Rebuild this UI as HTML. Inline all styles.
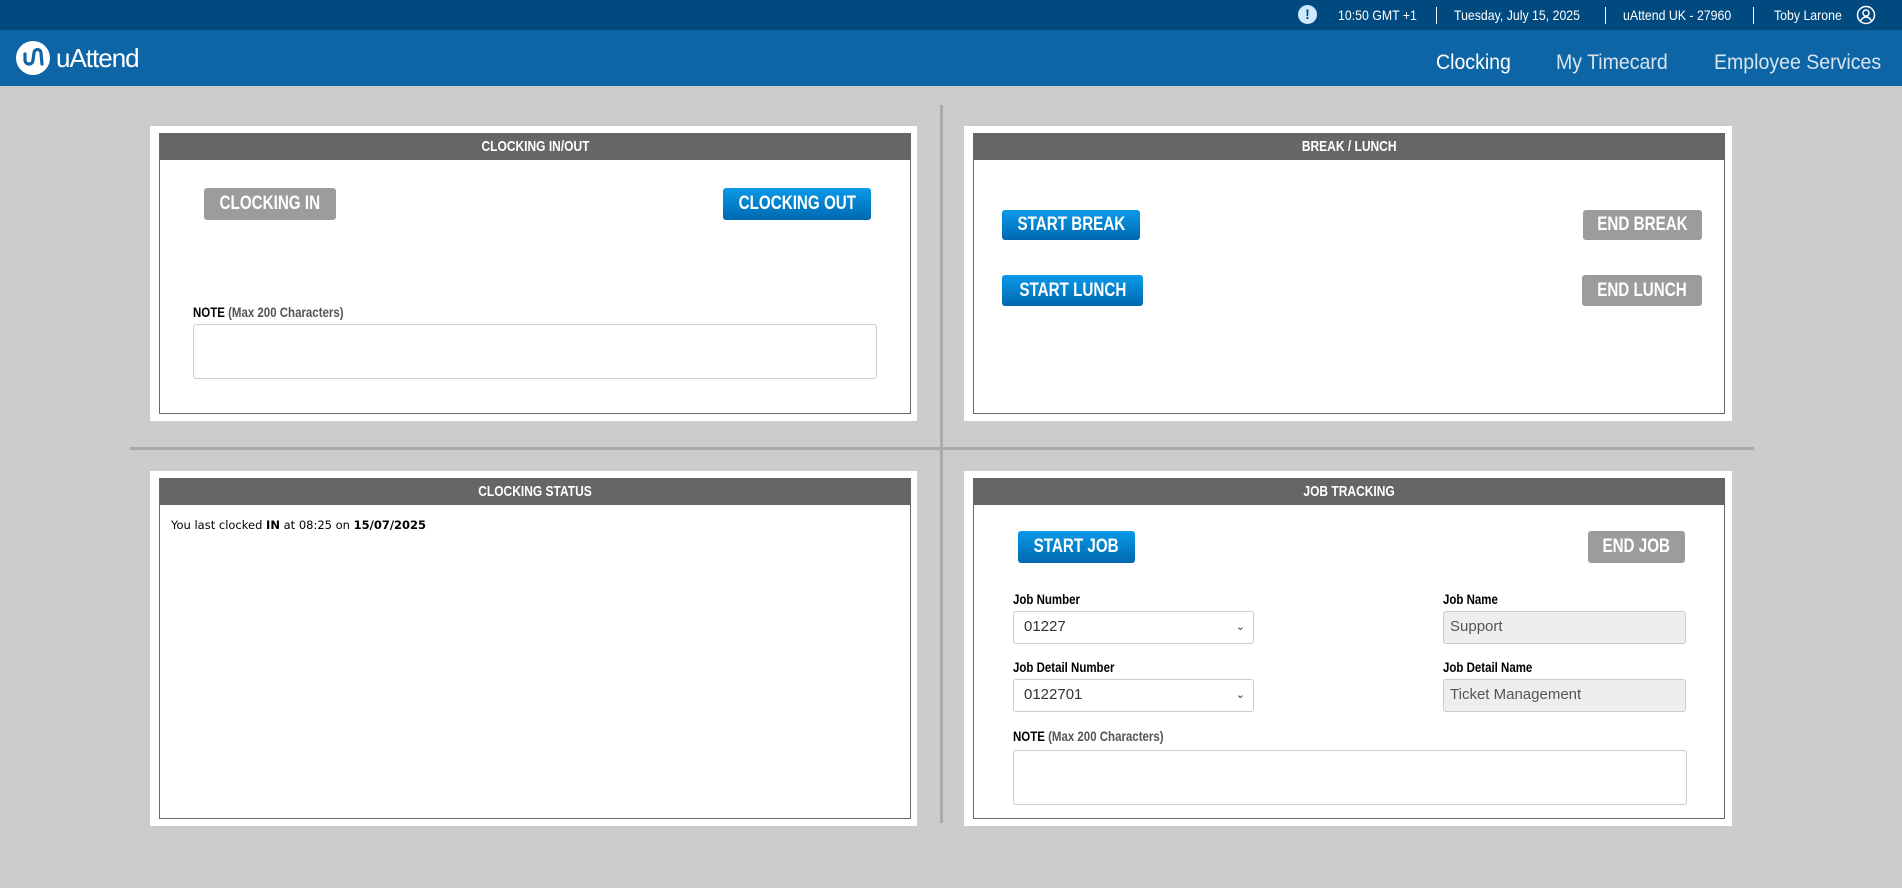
<!DOCTYPE html>
<html><head><meta charset="utf-8">
<style>
*{box-sizing:border-box;margin:0;padding:0}
body{width:1902px;height:888px;background:#cccccc;font-family:"Liberation Sans",sans-serif;position:relative;overflow:hidden}
.a{position:absolute}
.top{left:0;top:0;width:1902px;height:30px;background:#004a80}
.nav{left:0;top:30px;width:1902px;height:56px;background:#0d65a5}
.tt{color:#fff;font-size:14px;top:7px;white-space:nowrap;transform:scaleX(.88);transform-origin:left}
.sep{top:7px;width:1px;height:17px;background:#fff}
.ni{color:#fff;font-size:21px;top:51px;white-space:nowrap;transform:scaleX(.93);transform-origin:left}
.outer{background:#fff}
.inner{border:1px solid #666;background:#fff}
.hd{background:#666;color:#fff;font-weight:bold;font-size:15px;text-align:center;height:26px;line-height:26px}
.c{display:inline-block;transform:scaleX(.8)}
.btn{color:#fff;font-weight:bold;font-size:19px;text-align:center;border-radius:3px;white-space:nowrap}
.blue{background:linear-gradient(#0a9ae8,#0068b0)}
.grey{background:#9c9c9c}
.lbl{font-size:14px;font-weight:bold;color:#000;white-space:nowrap;transform:scaleX(.82);transform-origin:left}
.lbl span{color:#555}
.box{border:1px solid #ccc;border-radius:3px;background:#fff}
.sel{border:1px solid #ccc;border-radius:3px;background:#fff;font-size:15px;color:#333;padding-left:10px;line-height:30px}
.ro{background:#eee;border:1px solid #ccc;border-radius:3px;font-size:15px;color:#555;padding-left:6px;line-height:30px}
</style></head><body>
<div class="a top"></div>
<div class="a nav"></div>
<div class="a" style="left:1298px;top:5px;width:19px;height:19px;border-radius:50%;background:#cfe8fb;color:#004a80;font-weight:bold;font-size:14px;text-align:center;line-height:19px">!</div>
<div class="a tt" style="left:1338px">10:50 GMT +1</div>
<div class="a sep" style="left:1436px"></div>
<div class="a tt" style="left:1454px">Tuesday, July 15, 2025</div>
<div class="a sep" style="left:1605px"></div>
<div class="a tt" style="left:1623px">uAttend UK - 27960</div>
<div class="a sep" style="left:1753px"></div>
<div class="a tt" style="left:1774px">Toby Larone</div>
<svg class="a" style="left:1856px;top:5px" width="20" height="20" viewBox="0 0 20 20"><circle cx="10" cy="10" r="8.5" fill="none" stroke="#fff" stroke-width="1.5"/><circle cx="10" cy="8" r="3" fill="none" stroke="#fff" stroke-width="1.5"/><path d="M4.5 16c1.5-3 3.5-4 5.5-4s4 1 5.5 4" fill="none" stroke="#fff" stroke-width="1.5"/></svg>
<svg class="a" style="left:16px;top:41px" width="34" height="34" viewBox="0 0 34 34"><circle cx="17" cy="17" r="17" fill="#fff"/><path d="M9 13v6a4 4 0 0 0 8 0l1-7a3.5 3.5 0 0 1 7 0l1 11" fill="none" stroke="#0d65a5" stroke-width="3.2" stroke-linecap="round"/></svg>
<div class="a" style="left:56px;top:43px;color:#fff;font-size:26px;letter-spacing:-1px">uAttend</div>
<div class="a ni" style="left:1436px">Clocking</div>
<div class="a ni" style="left:1556px;color:#d6e4f0">My Timecard</div>
<div class="a ni" style="left:1714px;color:#d6e4f0">Employee Services</div>
<div class="a" style="left:940px;top:105px;width:3px;height:718px;background:#aaa"></div>
<div class="a" style="left:130px;top:447px;width:1624px;height:3px;background:#aaa"></div>
<!-- panel 1 -->
<div class="a outer" style="left:150px;top:126px;width:767px;height:295px"></div>
<div class="a inner" style="left:159px;top:133px;width:752px;height:281px"><div class="hd"><span class="c">CLOCKING IN/OUT</span></div></div>
<div class="a btn grey" style="left:204px;top:188px;width:132px;height:32px;line-height:32px"><span class="c">CLOCKING IN</span></div>
<div class="a btn blue" style="left:723px;top:188px;width:148px;height:32px;line-height:32px"><span class="c">CLOCKING OUT</span></div>
<div class="a lbl" style="left:193px;top:304px">NOTE <span>(Max 200 Characters)</span></div>
<div class="a box" style="left:193px;top:324px;width:684px;height:55px"></div>
<!-- panel 2 -->
<div class="a outer" style="left:964px;top:126px;width:768px;height:295px"></div>
<div class="a inner" style="left:973px;top:133px;width:752px;height:281px"><div class="hd"><span class="c">BREAK / LUNCH</span></div></div>
<div class="a btn blue" style="left:1002px;top:210px;width:138px;height:30px;line-height:30px"><span class="c">START BREAK</span></div>
<div class="a btn grey" style="left:1583px;top:210px;width:119px;height:30px;line-height:30px"><span class="c">END BREAK</span></div>
<div class="a btn blue" style="left:1002px;top:275px;width:141px;height:31px;line-height:31px"><span class="c">START LUNCH</span></div>
<div class="a btn grey" style="left:1582px;top:275px;width:120px;height:31px;line-height:31px"><span class="c">END LUNCH</span></div>
<!-- panel 3 -->
<div class="a outer" style="left:150px;top:471px;width:767px;height:355px"></div>
<div class="a inner" style="left:159px;top:478px;width:752px;height:341px"><div class="hd"><span class="c">CLOCKING STATUS</span></div></div>
<div class="a" style="left:171px;top:518px;font-family:'DejaVu Sans',sans-serif;font-size:11.5px;color:#000;white-space:nowrap">You last clocked <b>IN</b> at 08:25 on <b>15/07/2025</b></div>
<!-- panel 4 -->
<div class="a outer" style="left:964px;top:471px;width:768px;height:355px"></div>
<div class="a inner" style="left:973px;top:478px;width:752px;height:341px"><div class="hd"><span class="c">JOB TRACKING</span></div></div>
<div class="a btn blue" style="left:1018px;top:531px;width:117px;height:32px;line-height:32px"><span class="c">START JOB</span></div>
<div class="a btn grey" style="left:1588px;top:531px;width:97px;height:32px;line-height:32px"><span class="c">END JOB</span></div>
<div class="a lbl" style="left:1013px;top:591px">Job Number</div>
<div class="a sel" style="left:1013px;top:611px;width:241px;height:33px">01227<span style="position:absolute;right:8px;top:0;font-size:11px">&#8964;</span></div>
<div class="a lbl" style="left:1443px;top:591px">Job Name</div>
<div class="a ro" style="left:1443px;top:611px;width:243px;height:33px">Support</div>
<div class="a lbl" style="left:1013px;top:659px">Job Detail Number</div>
<div class="a sel" style="left:1013px;top:679px;width:241px;height:33px">0122701<span style="position:absolute;right:8px;top:0;font-size:11px">&#8964;</span></div>
<div class="a lbl" style="left:1443px;top:659px">Job Detail Name</div>
<div class="a ro" style="left:1443px;top:679px;width:243px;height:33px">Ticket Management</div>
<div class="a lbl" style="left:1013px;top:728px">NOTE <span>(Max 200 Characters)</span></div>
<div class="a box" style="left:1013px;top:750px;width:674px;height:55px"></div>
</body></html>
